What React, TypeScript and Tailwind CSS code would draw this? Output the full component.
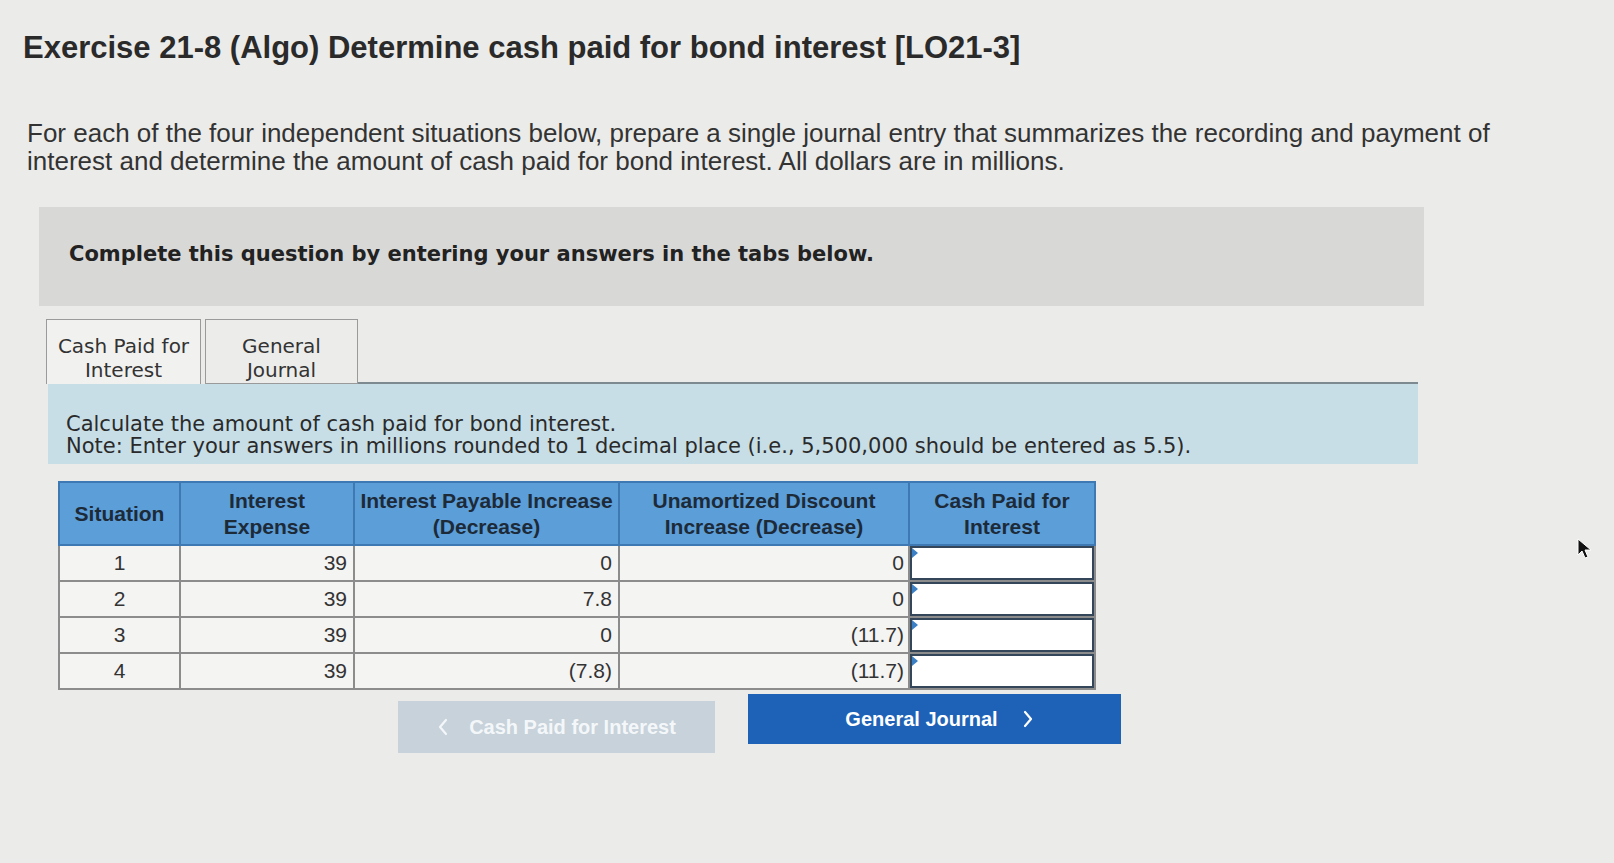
import React from "react";

const rows = [
  { s: "1", exp: "39", pay: "0", disc: "0" },
  { s: "2", exp: "39", pay: "7.8", disc: "0" },
  { s: "3", exp: "39", pay: "0", disc: "(11.7)" },
  { s: "4", exp: "39", pay: "(7.8)", disc: "(11.7)" },
];

function Chevron({ dir, className }: { dir: "left" | "right"; className?: string }) {
  return (
    <svg width="12" height="18" viewBox="0 0 12 18" className={className}>
      <path
        d={dir === "left" ? "M9 2 L3 9 L9 16" : "M3 2 L9 9 L3 16"}
        fill="none"
        stroke="currentColor"
        strokeWidth="2.2"
        strokeLinecap="round"
        strokeLinejoin="round"
      />
    </svg>
  );
}

export default function App() {
  const arial = "font-['Liberation_Sans',Arial,sans-serif]";
  const dejavu = "font-['DejaVu_Sans',Verdana,sans-serif]";

  return (
    <div className={`relative min-h-screen bg-[#ebebe9] pt-[29px] pl-[23px] text-[#2b2b2b] ${arial}`}>
      <h1 className="text-[31px] leading-[38px] font-bold text-[#2a2a2a]">
        Exercise 21-8 (Algo) Determine cash paid for bond interest [LO21-3]
      </h1>

      <p className="mt-[52px] ml-[4px] text-[26px] leading-[28px] text-[#333]">
        For each of the four independent situations below, prepare a single journal entry that summarizes the recording and payment of
        <br />
        interest and determine the amount of cash paid for bond interest. All dollars are in millions.
      </p>

      <div className={`mt-[32px] ml-[16px] w-[1385px] h-[99px] bg-[#d8d8d7] pl-[30px] pt-[33px] ${dejavu}`}>
        <div className="text-[21px] leading-[28px] font-bold text-[#222]">
          Complete this question by entering your answers in the tabs below.
        </div>
      </div>

      <div className={`mt-[13px] ml-[23px] w-[1372px] ${dejavu}`}>
        <div className="flex items-end h-[65px]">
          <div className="w-[155px] h-[65px] pt-[12px] bg-[#f1f1f0] border border-b-0 border-[#9a9a9a] flex items-center justify-center text-center text-[20px] leading-[24px] text-[#333]">
            Cash Paid for
            <br />
            Interest
          </div>
          <div className="ml-[4px] w-[153px] h-[65px] pt-[12px] bg-[#ececeb] border border-[#9a9a9a] flex items-center justify-center text-center text-[20px] leading-[24px] text-[#333]">
            General
            <br />
            Journal
          </div>
          <div className="flex-1 border-b-2 border-[#7d8a90]" />
        </div>

        <div className="ml-[2px] h-[80px] bg-[#c7dee7] pl-[18px] pt-[29px] text-[21px] leading-[22px] text-[#2a2a2a]">
          <div>Calculate the amount of cash paid for bond interest.</div>
          <div>Note: Enter your answers in millions rounded to 1 decimal place (i.e., 5,500,000 should be entered as 5.5).</div>
        </div>

        <div className={`mt-[17px] ml-[12px] ${arial}`}>
          <table className="border-collapse text-[21px] text-[#333]">
            <thead>
              <tr className="h-[63px] bg-[#5b9ed8] text-[#1d2a38] font-bold leading-[26px]">
                <th className="w-[121px] border-2 border-[#3f79b3] font-bold">Situation</th>
                <th className="w-[174px] border-2 border-[#3f79b3] font-bold">
                  Interest
                  <br />
                  Expense
                </th>
                <th className="w-[265px] border-2 border-[#3f79b3] font-bold">
                  Interest Payable Increase
                  <br />
                  (Decrease)
                </th>
                <th className="w-[290px] border-2 border-[#3f79b3] font-bold">
                  Unamortized Discount
                  <br />
                  Increase (Decrease)
                </th>
                <th className="w-[186px] border-2 border-[#3f79b3] font-bold">
                  Cash Paid for
                  <br />
                  Interest
                </th>
              </tr>
            </thead>
            <tbody>
              {rows.map((r) => (
                <tr key={r.s} className="h-[36px] bg-[#f4f4f3]">
                  <td className="border-2 border-[#8c8c8c] text-center">{r.s}</td>
                  <td className="border-2 border-[#8c8c8c] text-right pr-[6px]">{r.exp}</td>
                  <td className="border-2 border-[#8c8c8c] text-right pr-[6px]">{r.pay}</td>
                  <td className="border-2 border-[#8c8c8c] text-right pr-[4px]">{r.disc}</td>
                  <td className="border-2 border-[#8c8c8c] p-0">
                    <div className="relative h-[34px] bg-white border-2 border-[#34475a]">
                      <div className="absolute left-0 top-0 w-0 h-0 border-t-[5px] border-b-[5px] border-l-[6px] border-t-transparent border-b-transparent border-l-[#3b7fc4]" />
                    </div>
                  </td>
                </tr>
              ))}
            </tbody>
          </table>
        </div>

        <div className={`mt-[4px] ml-[352px] flex items-start gap-[33px] ${arial}`}>
          <button className="mt-[7px] w-[317px] h-[52px] bg-[#c7d2da] text-[#f4f7f9] font-bold text-[20px] flex items-center justify-center gap-[20px]">
            <Chevron dir="left" />
            Cash Paid for Interest
          </button>
          <button className="w-[373px] h-[50px] bg-[#1e62b8] text-white font-bold text-[20px] flex items-center justify-center gap-[24px] pl-[10px]">
            General Journal
            <Chevron dir="right" />
          </button>
        </div>
      </div>

      <svg className="absolute left-[1577px] top-[538px]" width="16" height="22" viewBox="0 0 16 22">
        <path d="M1 1 L1 17 L5 13 L8 20 L11 19 L8 12 L14 12 Z" fill="#111" stroke="#fff" strokeWidth="1" />
      </svg>
    </div>
  );
}
